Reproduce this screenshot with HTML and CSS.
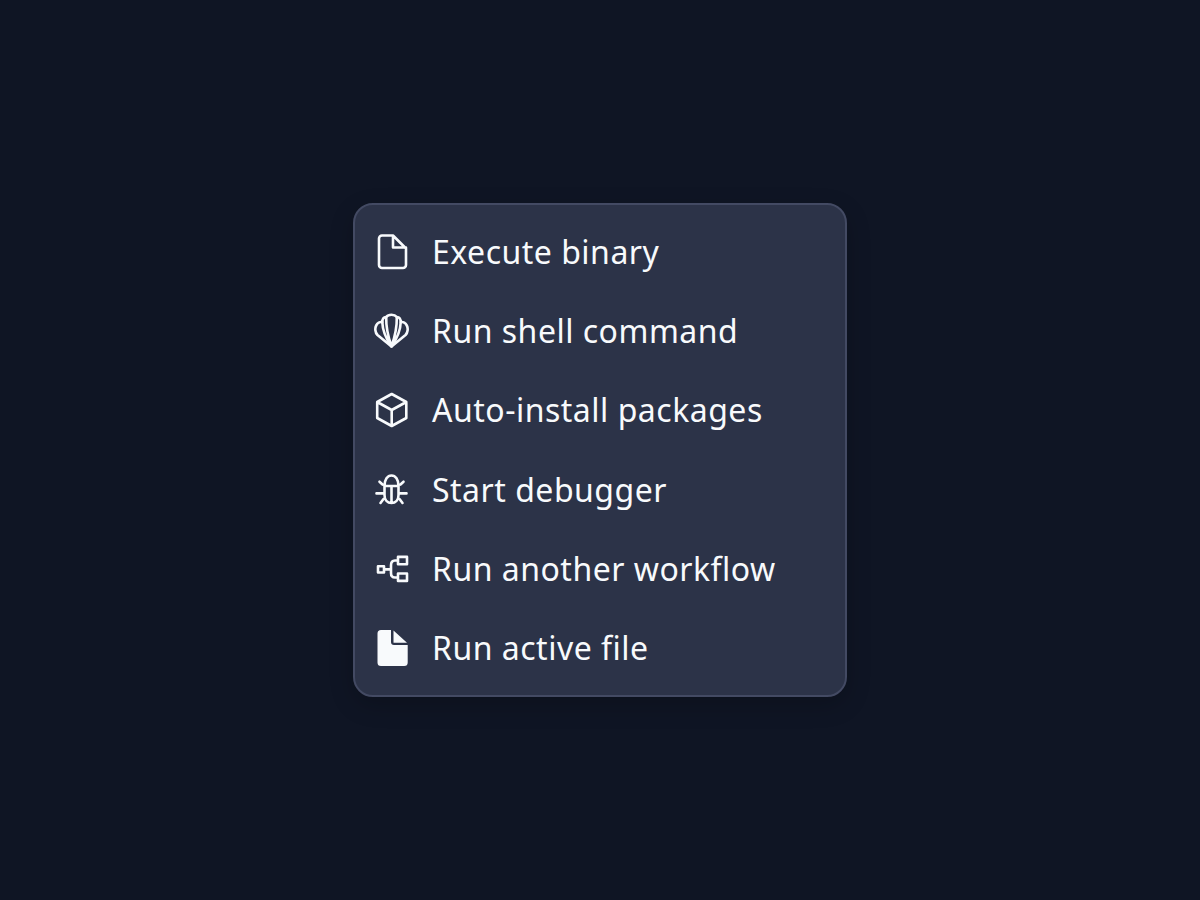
FILE: index.html
```html
<!DOCTYPE html>
<html lang="en">
<head>
<meta charset="utf-8">
<title>Run menu</title>
<link rel="stylesheet" href="styles.css">
</head>
<body>
<ul class="menu">
  <li class="item">
    <svg class="icon" viewBox="0 0 36 36"><path d="M19 1.500H8a3 3 0 0 0-3 3V31a3 3 0 0 0 3 3h21a3 3 0 0 0 3-3V14.500L19 1.500zM19 1.500V13.500H32"/></svg>
    <span class="label">Execute binary</span>
  </li>
  <li class="item">
    <svg class="icon" viewBox="0 0 36 36"><path d="M17.500 33.500L3.500 22C1 19.500 0.800 15 2.200 12.500C3.200 10 6 8.500 8.300 9.200C8.300 6.500 9.800 4.200 12.200 4C13.300 2.600 15.500 1.800 17.500 1.800C19.500 1.800 21.700 2.600 22.800 4C25.200 4.200 26.700 6.500 26.700 9.200C29 8.500 31.800 10 32.800 12.500C34.200 15 34 19.500 31.500 22L17.500 33.500Z"/><path d="M17.500 33.500C14.500 25 12 13 12.200 4M17.500 33.500C20.500 25 23 13 22.800 4M17.500 33.500C13 27 8.500 17 8.300 9.200M17.500 33.500C22 27 26.500 17 26.700 9.200"/></svg>
    <span class="label">Run shell command</span>
  </li>
  <li class="item">
    <svg class="icon" viewBox="0 0 36 36"><path d="M17.700 2L32.300 10V26L17.700 34L3.200 26V10L17.700 2ZM3.200 10L17.700 18L32.300 10M17.700 18V34"/></svg>
    <span class="label">Auto-install packages</span>
  </li>
  <li class="item">
    <svg class="icon" viewBox="0 0 36 36"><path d="M10.500 14C10.500 7.500 13.500 3.500 17.500 3.500S24.500 7.500 24.500 14V23C24.500 28 21.500 31 17.500 31S10.500 28 10.500 23V14ZM10.500 14H24.500M17.500 14V31M5.500 9.700L8.500 12.500M29.500 9.700L26.500 12.500M2.500 21.400H8.500M32.500 21.400H26.500M6.500 31L9.500 27M28.500 31L25.500 27"/></svg>
    <span class="label">Start debugger</span>
  </li>
  <li class="item">
    <svg class="icon" viewBox="0 0 36 36"><path d="M4 15.200H10V21.500H4ZM24 5.900H33V13.200H24ZM24 22.500H33V29.900H24ZM10 18.400H17M24 9.500H21C18 9.500 17 12 17 14.500V22C17 24.500 18 26.500 21 26.500H24"/></svg>
    <span class="label">Run another workflow</span>
  </li>
  <li class="item">
    <svg class="icon icon-solid" viewBox="0 0 36 36"><path d="M7 0H17V12C17 14 18 15 20 15H33.700V32.500A3.500 3.500 0 0 1 30.200 36H7A3.500 3.500 0 0 1 3.500 32.500V3.500A3.500 3.500 0 0 1 7 0ZM19.500 0.500L33 12.700H19.500Z"/></svg>
    <span class="label">Run active file</span>
  </li>
</ul>
</body>
</html>
```

FILE: styles.css
```css
* { box-sizing: border-box; }
html, body { height: 100%; }
body {
  margin: 0;
  background: #0f1524;
  display: flex;
  align-items: center;
  justify-content: center;
  font-family: "Noto Sans", "Open Sans", sans-serif;
}
.menu {
  list-style: none;
  margin: 0;
  padding: 7.4px 19px;
  width: 494px;
  height: 494px;
  background: #2c3348;
  border: 2px solid #434a63;
  border-radius: 20px;
  box-shadow: 0 8px 24px rgba(0, 0, 0, 0.2);
}
.item {
  display: flex;
  align-items: center;
  gap: 22px;
  height: 79.2px;
  color: #f8fafc;
}
.icon {
  flex: none;
  width: 36px;
  height: 36px;
  fill: none;
  stroke: #f8fafc;
  stroke-width: 2.6;
  stroke-linecap: round;
  stroke-linejoin: round;
}
.icon-solid {
  fill: #f8fafc;
  stroke: none;
}
.label {
  font-size: 32px;
  line-height: 40px;
  letter-spacing: 0.5px;
  white-space: nowrap;
}
```
